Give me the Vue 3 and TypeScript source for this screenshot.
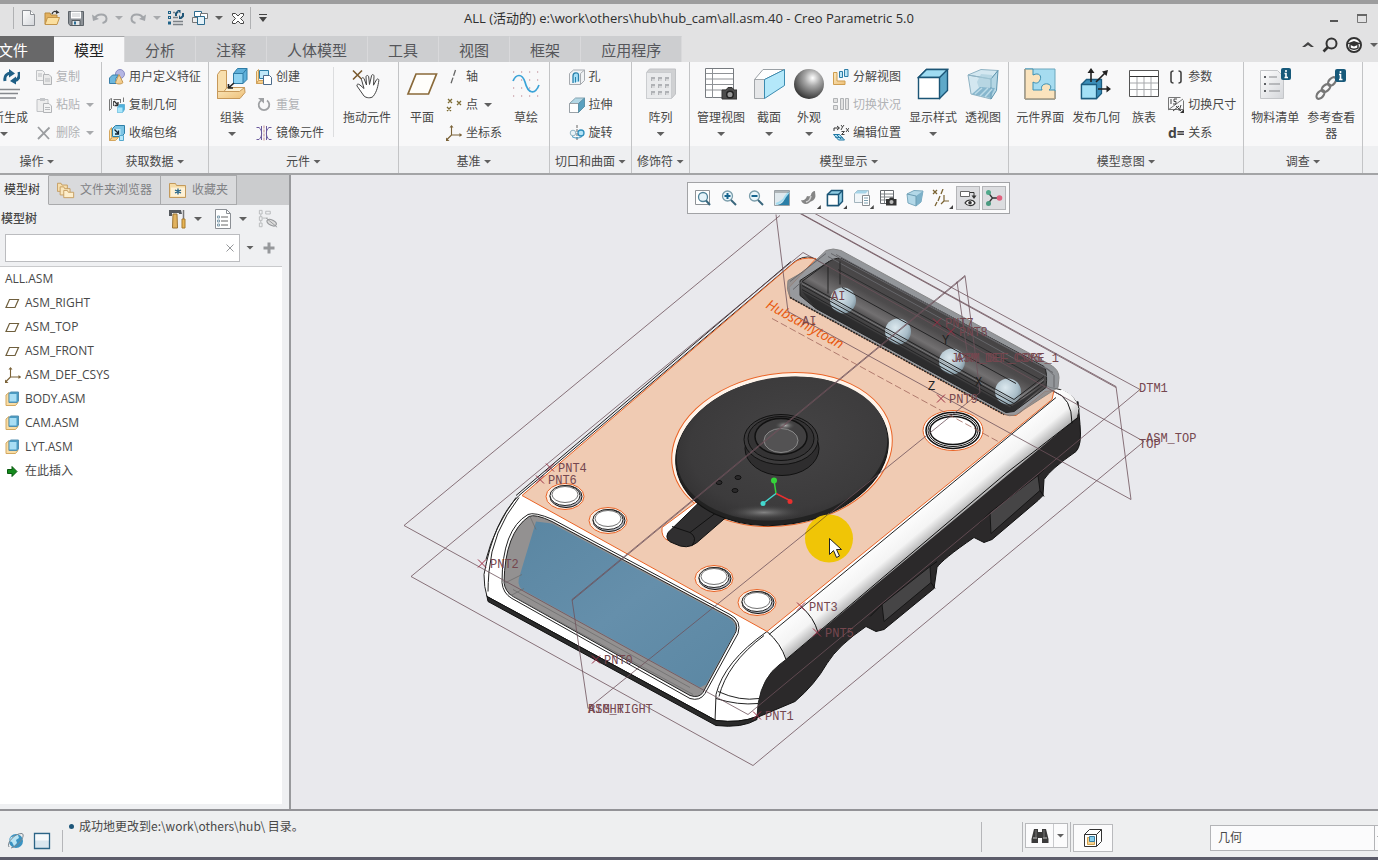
<script setup lang="ts">
import { ref } from 'vue'

interface Command {
  label: string
  icon: string
  arrow?: boolean
  disabled?: boolean
}
type Block =
  | { kind: 'big'; cmd: Command }
  | { kind: 'list'; cmds: Command[] }
  | { kind: 'rule' }
interface Group {
  title: string
  first?: boolean
  blocks: Block[]
}

const big = (label: string, icon: string, arrow = false): Block => ({ kind: 'big', cmd: { label, icon, arrow } })

const tabs: string[] = ['模型', '分析', '注释', '人体模型', '工具', '视图', '框架', '应用程序']
const activeTab = ref('模型')

const groups: Group[] = [
  {
    title: '操作',
    first: true,
    blocks: [
      big('重新生成', 'regen-big', true),
      {
        kind: 'list',
        cmds: [
          { label: '复制', icon: 'copy', disabled: true },
          { label: '粘贴', icon: 'paste', disabled: true, arrow: true },
          { label: '删除', icon: 'delete', disabled: true, arrow: true },
        ],
      },
    ],
  },
  {
    title: '获取数据',
    blocks: [
      {
        kind: 'list',
        cmds: [
          { label: '用户定义特征', icon: 'udf' },
          { label: '复制几何', icon: 'copygeom' },
          { label: '收缩包络', icon: 'shrink' },
        ],
      },
    ],
  },
  {
    title: '元件',
    blocks: [
      big('组装', 'assemble', true),
      {
        kind: 'list',
        cmds: [
          { label: '创建', icon: 'create' },
          { label: '重复', icon: 'repeat', disabled: true },
          { label: '镜像元件', icon: 'mirror' },
        ],
      },
      { kind: 'rule' },
      big('拖动元件', 'drag'),
    ],
  },
  {
    title: '基准',
    blocks: [
      big('平面', 'plane-big'),
      {
        kind: 'list',
        cmds: [
          { label: '轴', icon: 'axis' },
          { label: '点', icon: 'points', arrow: true },
          { label: '坐标系', icon: 'csys' },
        ],
      },
      big('草绘', 'sketch'),
    ],
  },
  {
    title: '切口和曲面',
    blocks: [
      {
        kind: 'list',
        cmds: [
          { label: '孔', icon: 'hole' },
          { label: '拉伸', icon: 'extrude' },
          { label: '旋转', icon: 'revolve' },
        ],
      },
    ],
  },
  { title: '修饰符', blocks: [big('阵列', 'pattern', true)] },
  {
    title: '模型显示',
    blocks: [
      big('管理视图', 'viewmgr', true),
      big('截面', 'section', true),
      big('外观', 'appearance', true),
      {
        kind: 'list',
        cmds: [
          { label: '分解视图', icon: 'explode' },
          { label: '切换状况', icon: 'toggle', disabled: true },
          { label: '编辑位置', icon: 'editpos' },
        ],
      },
      big('显示样式', 'style', true),
      big('透视图', 'persp'),
    ],
  },
  {
    title: '模型意图',
    blocks: [
      big('元件界面', 'puzzle'),
      big('发布几何', 'publish'),
      big('族表', 'famtable'),
      {
        kind: 'list',
        cmds: [
          { label: '参数', icon: 'params' },
          { label: '切换尺寸', icon: 'dims' },
          { label: '关系', icon: 'relation' },
        ],
      },
    ],
  },
  { title: '调查', blocks: [big('物料清单', 'bom'), big('参考查看器', 'refview')] },
]

interface Quick {
  icon?: string
  name: string
  arrow?: boolean
  disabled?: boolean
}
const quick: Quick[] = [
  { icon: 'new', name: '新建' },
  { icon: 'open', name: '打开' },
  { icon: 'save', name: '保存' },
  { icon: 'undo', name: '撤消', disabled: true },
  { name: '撤消列表', arrow: true, disabled: true },
  { icon: 'redo', name: '重做', disabled: true },
  { name: '重做列表', arrow: true, disabled: true },
  { icon: 'regen', name: '重新生成' },
  { icon: 'windows', name: '窗口' },
  { name: '窗口列表', arrow: true },
  { icon: 'closewin', name: '关闭' },
]

const tree = [
  { label: 'ALL.ASM', icon: '' },
  { label: 'ASM_RIGHT', icon: 'plane' },
  { label: 'ASM_TOP', icon: 'plane' },
  { label: 'ASM_FRONT', icon: 'plane' },
  { label: 'ASM_DEF_CSYS', icon: 'csys' },
  { label: 'BODY.ASM', icon: 'asm' },
  { label: 'CAM.ASM', icon: 'asm' },
  { label: 'LYT.ASM', icon: 'asm' },
  { label: '在此插入', icon: 'insert' },
]

const viewTools = [
  { icon: 'fit', name: '重新调整' },
  { icon: 'zoomin', name: '放大' },
  { icon: 'zoomout', name: '缩小' },
  { icon: 'repaint', name: '重画' },
  { icon: 'render', name: '渲染选项', more: true },
  { icon: 'shade', name: '显示样式', more: true },
  { icon: 'saved', name: '已保存方向', more: true },
  { icon: 'viewmgr-s', name: '视图管理器' },
  { icon: 'persp-s', name: '透视图' },
  { icon: 'datums', name: '基准显示过滤器', more: true },
  { icon: 'annot', name: '注释显示', on: true },
  { icon: 'spin', name: '旋转中心', on: true },
]

const points = [
  { t: 'PNT4', x: 550, y: 468 },
  { t: 'PNT6', x: 540, y: 480 },
  { t: 'PNT2', x: 482, y: 564 },
  { t: 'PNT0', x: 596, y: 660 },
  { t: 'PNT1', x: 757, y: 716 },
  { t: 'PNT3', x: 801, y: 607 },
  { t: 'PNT5', x: 817, y: 633 },
  { t: 'PNT9', x: 941, y: 399 },
  { t: 'PNT7', x: 937, y: 323 },
  { t: 'PNT8', x: 951, y: 332 },
]
const keys = [
  { x: 565, y: 497 },
  { x: 608, y: 521 },
  { x: 714, y: 579 },
  { x: 757, y: 603 },
]
const balls = [
  { x: 843, y: 301 },
  { x: 898, y: 332 },
  { x: 952, y: 362 },
  { x: 1008, y: 392 },
]

const filter = ref('几何')
const query = ref('')
</script>

<template>
  <div class="app">
    <svg class="sprite" aria-hidden="true">
      <defs>
        <linearGradient id="g-blue" x1="0" y1="0" x2="1" y2="1"><stop offset="0" stop-color="#bdeafc" /><stop offset="1" stop-color="#58b4dc" /></linearGradient>
        <linearGradient id="g-tan" x1="0" y1="0" x2="1" y2="1"><stop offset="0" stop-color="#fbe9c0" /><stop offset="1" stop-color="#eec078" /></linearGradient>
        <linearGradient id="g-grey" x1="0" y1="0" x2="1" y2="1"><stop offset="0" stop-color="#ffffff" /><stop offset="1" stop-color="#d4d6da" /></linearGradient>
        <radialGradient id="g-ball" cx=".62" cy=".3" r=".75"><stop offset="0" stop-color="#ffffff" /><stop offset=".35" stop-color="#a9a9a9" /><stop offset="1" stop-color="#2e2e2e" /></radialGradient>
      </defs>

      <symbol id="new" viewBox="0 0 16 16"><path d="M2.500.500h8l4 4v11h-12z" fill="url(#g-grey)" stroke="#8b8e93" /><path d="M10.500.500v4h4" fill="#fff" stroke="#8b8e93" /></symbol>
      <symbol id="open" viewBox="0 0 16 16"><path d="M1 3h5l1 2h6v9H1z" fill="#e3b160" stroke="#b98a3d" /><path d="M3.500 7.500h12l-2.500 7H1z" fill="#fbdf9f" stroke="#c3954b" /><path d="M8 4c1-3 3-3 5-2" fill="none" stroke="#333" stroke-width="1.300" /><path d="M12 0l3.500 2.500L12 4z" fill="#333" /></symbol>
      <symbol id="save" viewBox="0 0 16 16"><path d="M.500 1.500h15v14H2l-1.500-2z" fill="#8d9297" stroke="#5d6369" /><path d="M3 1.500h10v7H3z" fill="#fff" /><path d="M4 4h8M4 6h8" stroke="#c5c8cb" /><path d="M4 10.500h8v5H4z" fill="#e3e6e8" stroke="#555b60" /><path d="M6 11.500h2v3H6z" fill="#2b6e96" /></symbol>
      <symbol id="undo" viewBox="0 0 16 16"><path d="M3 8C5 3.500 14 3 14.500 8.500c0 2-1 4-4 4.500" fill="none" stroke="#a3a6aa" stroke-width="2" /><path d="M0 4.500l1 6.500 6-2z" fill="#a3a6aa" /></symbol>
      <symbol id="redo" viewBox="0 0 16 16"><path d="M13 8C11 3.500 2 3 1.500 8.500c0 2 1 4 4 4.500" fill="none" stroke="#a3a6aa" stroke-width="2" /><path d="M16 4.500l-1 6.500-6-2z" fill="#a3a6aa" /></symbol>
      <symbol id="regen" viewBox="0 0 16 16"><g fill="none" stroke="#1e6288"><rect x=".500" y="1.500" width="2" height="2" /><rect x=".500" y="6.500" width="2" height="2" /><rect x=".500" y="12" width="2" height="2" /></g><path d="M5 2.500h2M5 7.500h5M5 11.500h10M5 14.500h10" stroke="#7d8287" stroke-width="1.300" /><path d="M8 6V3.500l2-2M15 3v3l-2 2" fill="none" stroke="#1e5577" stroke-width="2" /><path d="M9 0h3.500v3.500zM11 5v4l3 0z" fill="#1e5577" /></symbol>
      <symbol id="windows" viewBox="0 0 16 16"><path d="M2.500 1.500h7v5h-7z" fill="#fff" stroke="#2c6b8e" /><path d="M8.500 3.500h7v5h-7z" fill="#fff" stroke="#777" /><path d="M.500 7.500h7v5h-7z" fill="#eee" stroke="#777" /><path d="M5.500 6.500h7v8h-7z" fill="#e4f1f8" stroke="#2c6b8e" /></symbol>
      <symbol id="closewin" viewBox="0 0 16 16"><path d="M2.500 3.500h3L8 6l2.500-2.500h3v2L10.500 8.500l3 3v2h-3L8 11l-2.500 2.500h-3v-2l3-3-3-3z" fill="#fff" stroke="#444" /></symbol>

      <symbol id="regen-big" viewBox="0 0 32 32"><path d="M17 13c-1-5 2-8 6-8M31 4c1 5-1 8-5 9" fill="none" stroke="#1f5f86" stroke-width="3" /><path d="M21 1l6 4.500-6 4zM28 8.500v8L22 13z" fill="#1f5f86" /><path d="M4 21.500h28M4 25.500h26M4 30h24" stroke="#85888d" stroke-width="1.500" /></symbol>
      <symbol id="copy" viewBox="0 0 16 16"><path d="M.500 1.500h6l2 2v8h-8z" fill="#f1f1f1" stroke="#c0c2c5" /><path d="M7.500 5.500h5.500l2.500 2.500v7.500h-8z" fill="#eaeaea" stroke="#b2b4b7" /><path d="M2 5h4M2 7h4M9 10h5M9 12h5" stroke="#b9bbbe" /></symbol>
      <symbol id="paste" viewBox="0 0 16 16"><path d="M1 2.500h11v12H1z" fill="#ededed" stroke="#c0c2c5" /><path d="M4 1h5v3H4z" fill="#c4c6c9" /><path d="M7.500 6.500h5.500l2.500 2.500v6.500h-8z" fill="#f3f3f3" stroke="#b2b4b7" /><path d="M9 10.500h5M9 12.500h5" stroke="#b9bbbe" /></symbol>
      <symbol id="delete" viewBox="0 0 16 16"><path d="M2 2l11 12M13.500 2.500L2 14" stroke="#9b9da0" stroke-width="1.800" /></symbol>
      <symbol id="udf" viewBox="0 0 16 16"><circle cx="11" cy="5" r="4.500" fill="#b4b6e4" stroke="#8a8cc4" /><path d="M.500 9l3-3h6l-2.500 3v5.500H.500z" fill="#6db7dd" stroke="#3a7fa8" /><path d="M6.500 13.500L10 5.500l4 8c-1.500 2-6 2-7.500 0z" fill="url(#g-tan)" stroke="#c69a55" /></symbol>
      <symbol id="copygeom" viewBox="0 0 16 16"><path d="M.500 13.500v-11l2-1v10zM4.500 2.500h7" fill="#eee" stroke="#777" /><path d="M4.500 4v5" stroke="#555" /><path d="M5 4l4 4M9 5v3.500H5.500" fill="none" stroke="#333" stroke-width="1.300" /><path d="M11.500 2v4M14.500.500V5" stroke="#777" /><path d="M8.500 10.500l2-3h5v5l-2 3h-5z" fill="#4fb0dc" stroke="#64b2d4" /><path d="M8.500 10.500h5v5h-5z" fill="#a9e6fb" /></symbol>
      <symbol id="shrink" viewBox="0 0 16 16"><path d="M.500 5.500l2-3v10l-2 3z" fill="#fbe3b0" stroke="#d5a75e" /><path d="M.500 15.500h6l3-3h-6z" fill="#f6cf8c" stroke="#d5a75e" /><path d="M3.500 3.500l3-3h9v8l-3 3h-9z" fill="#7cc4e4" stroke="#2d7fa8" /><path d="M4 4h7.500v7H4z" fill="#c2ecfb" /><path d="M5.500 4.500l4 4M9.500 5.500v3.500H6" fill="none" stroke="#123" stroke-width="1.300" /><path d="M10.500 10.500h4v5h-4z" fill="#b7e8fa" stroke="#55a8cd" /></symbol>
      <symbol id="assemble" viewBox="0 0 32 32"><path d="M1.500 6.500l3-4h6v20l-3 8h-6z" fill="#f8dfae" stroke="#c6985a" /><path d="M1.500 30.500v-7h19l8-4 .500 5-5 6z" fill="url(#g-tan)" stroke="#c6985a" /><path d="M8 23.500l3-4h17.500l-5 4z" fill="#fdf0d0" stroke="#c6985a" /><path d="M17.500 5.500l4-5h9.500v11l-4 4h-9.500z" fill="#5fb0da" stroke="#2f7ca6" /><path d="M17.500 5.500h9.500v10h-9.500z" fill="#8ed2f1" stroke="#2f7ca6" /><path d="M27 5.500l4-5" stroke="#2f7ca6" /><path d="M18 15l-5 4.500M12.500 16v4H17" fill="none" stroke="#222" stroke-width="1.600" /></symbol>
      <symbol id="create" viewBox="0 0 16 16"><path d="M.500 2.500l2-2v11l-2 3z" fill="#fbe3b0" stroke="#cfa05a" /><path d="M.500 14.500h6l2-3h-6z" fill="#f6cf8c" stroke="#cfa05a" /><path d="M3.500 1.500h9v8h-9z" fill="#bfe7f8" stroke="#2d7fa8" /><path d="M7.500 6.500h6l2 2v7h-8z" fill="#fff" stroke="#4d6b8a" /></symbol>
      <symbol id="repeat" viewBox="0 0 16 16"><path d="M5 3.500a5.300 5.300 0 1 0 6 0" fill="none" stroke="#9fa1a4" stroke-width="1.800" /><path d="M2 1h6v5.500z" fill="#9fa1a4" /></symbol>
      <symbol id="mirror" viewBox="0 0 16 16"><path d="M8 .500v15" stroke="#c28f91" stroke-dasharray="3 1" /><path d="M.500 2.500H3c3.500 2.500 3.500 9 0 12H.500M5.500 1v14M15.500 2.500H13c-3.500 2.500-3.500 9 0 12h2.500M10.500 1v14" fill="none" stroke="#6b5a9d" /></symbol>
      <symbol id="drag" viewBox="0 0 32 32"><path d="M2 2.500l9 9M11 2.500l-9 9" stroke="#7a5a2e" stroke-width="1.600" /><path d="M13 28l-7-10c-.6-2 1.300-2.500 3-1l4 3.500-2.500-9c-.3-2 2-2.500 2.700-.5l2.300 6-.5-8c0-2 2.500-2 2.700 0l.8 7.500L20.500 8c.2-2 2.500-1.700 2.500.2l-.5 9 3-5.500c1-1.500 2.700-.5 2.300 1-.8 5-1.800 11-5.800 15.800-2 2-7 1.500-9-.5z" fill="#fff" stroke="#444" /></symbol>
      <symbol id="plane-big" viewBox="0 0 32 32"><path d="M10 6h20.500L22.500 26H2z" fill="#fffefb" stroke="#8a6a3a" stroke-width="1.700" /></symbol>
      <symbol id="axis" viewBox="0 0 16 16"><path d="M9.500 1L4.500 16" stroke="#666" stroke-width="1.300" stroke-dasharray="6 2" /></symbol>
      <symbol id="points" viewBox="0 0 16 16"><path d="M2 2l4 4M6 2L2 6M11 4l4 4M15 4l-4 4M1 10l4 4M5 10l-4 4" stroke="#7c6b33" stroke-width="1.300" /></symbol>
      <symbol id="csys" viewBox="0 0 16 16"><path d="M5.500 1v9h10M5.500 10L1 14.500" fill="none" stroke="#7a6238" stroke-width="1.100" /><path d="M3.500 2.500L5.500 0l2 2.500M13.500 8l2.500 2-2.500 2M0 12.500V16h3.500" fill="#7a6238" /></symbol>
      <symbol id="sketch" viewBox="0 0 32 32"><g stroke="#b87c88" stroke-width="1.200" stroke-dasharray="1.200 6.800"><path d="M3 4h28M3 12h28M3 20h28M3 28h28" /></g><path d="M3 13c3-7 9-8 12 1 3 12 10 13 14 3" fill="none" stroke="#3aa3d8" stroke-width="1.700" /></symbol>
      <symbol id="hole" viewBox="0 0 16 16"><path d="M.500 4.500l4-3.500h11v10.500l-4 4H.500z" fill="#f1f3f5" stroke="#a7abb0" /><path d="M11.500 4.500v11M11.500 4.500l4-3.500" stroke="#a7abb0" /><path d="M4 14V7c0-4 5.500-4 5.500-1v6.500" fill="#a7e0f7" stroke="#2a82ad" stroke-width="1.300" /><path d="M6.500 13.500V8" stroke="#2a82ad" /></symbol>
      <symbol id="extrude" viewBox="0 0 16 16"><path d="M.500 6.500l6-5.500h9v8.500l-6 6h-9z" fill="#b4d8e6" stroke="#84a3b0" /><path d="M.500 6.500h9v9h-9z" fill="#fff" stroke="#9aa1a7" /><path d="M9.500 6.500l6-5.500v8.500l-6 6z" fill="#5aa0bf" stroke="#5f92a8" /></symbol>
      <symbol id="revolve" viewBox="0 0 16 16"><path d="M8 0v16" stroke="#666" stroke-dasharray="3 1" /><circle cx="12" cy="8" r="3" fill="#b5e4f7" stroke="#2d8dbb" stroke-width="1.300" /><circle cx="4" cy="8" r="2.800" fill="#eaf3f7" stroke="#91b4c4" /><path d="M3 11.500c3 2 7 2 10 0" fill="none" stroke="#2d8dbb" /></symbol>
      <symbol id="pattern" viewBox="0 0 32 32"><path d="M1.500 4.500l3-3.500h26v25l-4 4.500h-25z" fill="#d0d1d3" stroke="#c0c2c5" /><path d="M1.500 4.500h25v26h-25z" fill="#e9eaec" stroke="#cbcdd0" /><g fill="#b0b2b6"><path d="M6 9h4v4H6zM13 9h4v4h-4zM20 9h4v4h-4zM6 16h4v4H6zM13 16h4v4h-4zM20 16h4v4h-4zM6 23h4v4H6zM13 23h4v4h-4zM20 23h4v4h-4z" /></g><path d="M7 12h3M14 12h3M21 12h3M7 19h3M14 19h3M21 19h3M7 26h3M14 26h3M21 26h3" stroke="#fff" /></symbol>
      <symbol id="viewmgr" viewBox="0 0 32 32"><path d="M.500.500h28v29h-28z" fill="#fff" stroke="#777b80" /><path d="M7.500 1v29M1 5.500h27M1 11h27M1 16.500h27M1 22h27" stroke="#8f9296" /><path d="M17 22h4l2-2.500h4l2 2.500h3v9H17z" fill="#4c4c4c" stroke="#333" /><circle cx="25" cy="26.500" r="3.300" fill="#999" stroke="#222" stroke-width="1.500" /></symbol>
      <symbol id="section" viewBox="0 0 32 32"><path d="M1.500 11.500L10 1.500h21.500l-20 10z" fill="#fff" stroke="#9aa0a5" /><path d="M1.500 11.500h10v19h-10z" fill="#e6e7e9" stroke="#a2a6aa" /><path d="M11.500 11.500l20-10v16l-20 13z" fill="#b4e8fa" stroke="#3b8bb0" /></symbol>
      <symbol id="appearance" viewBox="0 0 32 32"><circle cx="16" cy="16" r="15" fill="url(#g-ball)" /></symbol>
      <symbol id="explode" viewBox="0 0 16 16"><path d="M.500 3.500h3.500v8.500h8v3.500H.500z" fill="url(#g-tan)" stroke="#cf9e50" /><path d="M6.500 2.500h3v6h-3zM11.500.500h3.500v7h-3.500z" fill="#bde6f7" stroke="#2f7ea7" /></symbol>
      <symbol id="toggle" viewBox="0 0 16 16"><path d="M.500 1.500h4v4h-4zM.500 8.500h4v4h-4zM7.500 1.500h3v11h-3zM12.500 1.500h3v11h-3z" fill="#e2e2e2" stroke="#b0b2b5" /></symbol>
      <symbol id="editpos" viewBox="0 0 16 16"><path d="M1 6V3h5M4 1l2.500 2L4 5" fill="none" stroke="#333" /><path d="M8 0l1.500 2L11 0M9.500 2L8 5M13 3l3 4M16 3l-3 4M8.500 6.500h3l-3 3h3" fill="none" stroke="#444" /><path d="M.500 9.500h6l5 5.500h-6zM2 12l8 1M4 10l4 4" fill="#b7e3f5" stroke="#1f77a3" /></symbol>
      <symbol id="style" viewBox="0 0 32 32"><path d="M1.500 9.500l8-8h21v21l-8 8z" fill="#5ea9c9" stroke="#1b5576" stroke-width="1.400" /><path d="M1.500 9.500l8-8h21l-8 8z" fill="#9fdcf2" stroke="#1b5576" stroke-width="1.400" /><path d="M1.500 9.500h21v21h-21z" fill="#fff" stroke="#1b5576" stroke-width="1.400" /></symbol>
      <symbol id="persp" viewBox="0 0 32 32"><path d="M1 7L14 1.500l17 1-7 8.500zM1 7l3 19 20 5V11z" fill="#d3e7f0" stroke="#8fb3c4" /><path d="M24 11l7-8.500-1.500 20L24 31z" fill="#b4d6e4" stroke="#5d94ae" /><path d="M10 14l4-8 11 1v12l-13 1z" fill="#a5cbdb" opacity=".6" /><path d="M5 26l8-7 15 1-5 10z" fill="#74aac4" opacity=".8" /><path d="M8 26l7-6M13 28l8-8M18 29l7-8" stroke="#bcdbe8" stroke-width="1.500" /></symbol>
      <symbol id="puzzle" viewBox="0 0 32 32"><path d="M1 1h30v30H1z" fill="#a6dcf0" stroke="#6aa7bd" /><path d="M1 1h8v6c6-3 9 1 7 5-1 3-4 4-7 2v8h9c-2-4 2-7 6-6 4 1 3 5 1 6h6v9H1z" fill="#fae3bd" stroke="#3b8fb3" /><path d="M1 1v30h30v-8" fill="none" stroke="#d09668" /></symbol>
      <symbol id="publish" viewBox="0 0 32 32"><path d="M1.500 16.500l5-5h15v14l-5 5h-15z" fill="#3c8fba" stroke="#1d5d80" stroke-width="1.300" /><path d="M1.500 16.500h15v14h-15z" fill="#a3e0f6" stroke="#1d5d80" stroke-width="1.300" /><path d="M11 14V3M16 14L26 4M18 21h11" stroke="#222" stroke-width="1.600" /><path d="M7.500 5L11 0l3.500 5zM22 3.500l6-1.500-1.500 6zM26.500 17.500l4.500 3.500-4.500 3.500z" fill="#222" /></symbol>
      <symbol id="famtable" viewBox="0 0 32 32"><path d="M1.500 2.500h29v26h-29z" fill="#fff" stroke="#555" /><path d="M2 8.500h28" stroke="#333" /><path d="M2 15h28M2 21.500h28M9 9v19M16 9v19M23 9v19" stroke="#a7a9ac" /></symbol>
      <symbol id="params" viewBox="0 0 16 16"><path d="M5.500 2C3.500 2 3 2.500 3 4v8c0 1.500.5 2 2.500 2M10.500 2c2 0 2.500.5 2.500 2v8c0 1.500-.5 2-2.500 2" fill="none" stroke="#444" stroke-width="1.600" /></symbol>
      <symbol id="dims" viewBox="0 0 16 16"><path d="M.500.500h12M.500.500v12h15v-9M0 13L15 2" fill="none" stroke="#777" /><path d="M3 2v5M5 7h3V4.500H6V2h3M5 14l6-5M8 9l5 5M13 8l-2 6" fill="none" stroke="#444" /><path d="M16 12v4h-4z" fill="#333" /></symbol>
      <symbol id="relation" viewBox="0 0 16 16"><text x="0" y="13" font-size="14" font-weight="700" fill="#444" font-family="Open Sans, sans-serif">d=</text></symbol>
      <symbol id="bom" viewBox="0 0 32 32"><path d="M1.500 2.500h17l6 6v22h-23z" fill="url(#g-grey)" stroke="#c4c6c9" /><path d="M10 9h8M10 16h11M10 23h11" stroke="#85888c" stroke-width="1.200" /><path d="M5 8h2v2H5zM5 15h2v2H5zM5 22h2v2H5z" fill="#5d6064" /><rect x="22" y="0" width="10" height="12" rx="2" fill="#17597a" /><path d="M27 2v2M25.500 5.500H27V9M25.500 9.500h3.500" stroke="#fff" stroke-width="1.600" fill="none" /></symbol>
      <symbol id="refview" viewBox="0 0 32 32"><g fill="none" stroke="#777" stroke-width="2.200"><ellipse cx="5.500" cy="26.500" rx="5" ry="3" transform="rotate(-50 5.500 26.500)" /><ellipse cx="11" cy="20" rx="5" ry="3" transform="rotate(-40 11 20)" /><ellipse cx="17" cy="13.500" rx="5" ry="3" transform="rotate(-50 17 13.500)" /></g><rect x="20" y="1" width="11" height="13" rx="2" fill="#17597a" /><path d="M25.500 3v2M24 6.500h1.500V11M24 11.500h3.500" stroke="#fff" stroke-width="1.600" fill="none" /></symbol>

      <symbol id="folders" viewBox="0 0 20 18"><path d="M.500 1.500h4l1 2h6v7H.500z" fill="#f7dfae" stroke="#c39a5c" /><path d="M3.500 5.500h4l1 2h6v7h-11z" fill="#f9e6bd" stroke="#c39a5c" /><path d="M7.500 9.500h4l1 2h6v6h-11z" fill="#fdeecb" stroke="#c39a5c" /></symbol>
      <symbol id="fav" viewBox="0 0 18 16"><path d="M.500 1.500h6l1 2h9v12H.500z" fill="#f6dca6" stroke="#c39a5c" /><path d="M2 5.500h14v9H2z" fill="#fdf1d6" /><path d="M9 6.500v6M6 8l6 3M12 8l-6 3" stroke="#1c5f86" stroke-width="1.300" /></symbol>
      <symbol id="tools" viewBox="0 0 18 20"><path d="M0 1h12l1 4h-3V4H3v3H0z" fill="#55595e" /><path d="M4 5h4l.5 14h-5z" fill="#e2b35f" stroke="#9b7434" /><path d="M14.500 1v10" stroke="#777" stroke-width="1.500" /><path d="M13 10h3v9h-3z" fill="#e8b452" stroke="#a77a2f" /></symbol>
      <symbol id="listset" viewBox="0 0 18 20"><path d="M1.500.500h11l4 4v15h-15z" fill="#fff" stroke="#8b8f94" /><path d="M12.500.500v4h4" fill="none" stroke="#8b8f94" /><path d="M7 8h7M7 12h7M7 16h7" stroke="#666" /><path d="M3.500 7h2v2h-2zM3.500 11h2v2h-2zM3.500 15h2v2h-2z" fill="none" stroke="#7f9cad" /></symbol>
      <symbol id="treeeye" viewBox="0 0 22 20"><path d="M1.500.500h3v4h-3zM1.500 7.500h3v4h-3zM1.500 14.500h3v4h-3zM8.500 1.500h5v3h-5zM5 9h6M3 5v2M3 12v2" fill="none" stroke="#b5b7ba" /><ellipse cx="15" cy="14" rx="5.500" ry="3" transform="rotate(25 15 14)" fill="#ddd" stroke="#96989b" stroke-width="1.200" /><path d="M9 9l12 10" stroke="#96989b" /></symbol>
      <symbol id="plane" viewBox="0 0 16 16"><path d="M4.500 4.500h9L10 12.500H1z" fill="#fff" stroke="#6f5f3d" stroke-width="1.200" /></symbol>
      <symbol id="asm" viewBox="0 0 16 16"><path d="M1 4l3-2.500v10h9l-2.500 3H1z" fill="#f9dda4" stroke="#d3a860" /><path d="M4 2.500l1.500-1.500h8v9L12 11.500H4z" fill="#4a9cc4" stroke="#5590b0" /><path d="M4.500 3h7v7.500h-7z" fill="#a9def4" /></symbol>
      <symbol id="insert" viewBox="0 0 16 16"><path d="M2.500 6.500H7V3.500l5 5-5 5v-3H2.500z" fill="#148a1c" stroke="#0a5a10" /></symbol>

      <symbol id="fit" viewBox="0 0 18 18"><path d="M1.500 1.500h14v14h-14z" fill="#fff" stroke="#8f9397" /><circle cx="9" cy="8" r="4.500" fill="#e6f4fa" stroke="#4e8299" stroke-width="1.300" /><path d="M12 11.500l4 4.500" stroke="#39667c" stroke-width="2" /></symbol>
      <symbol id="zoomin" viewBox="0 0 18 18"><circle cx="7.500" cy="7" r="5" fill="#eaf6fb" stroke="#7b9dab" stroke-width="1.300" /><path d="M7.500 4v6M4.500 7h6" stroke="#16658f" stroke-width="2" /><path d="M11 11l5 5" stroke="#39667c" stroke-width="2" /></symbol>
      <symbol id="zoomout" viewBox="0 0 18 18"><circle cx="7.500" cy="7" r="5" fill="#eaf6fb" stroke="#7b9dab" stroke-width="1.300" /><path d="M4.500 7h6" stroke="#16658f" stroke-width="2" /><path d="M11 11l5 5" stroke="#39667c" stroke-width="2" /></symbol>
      <symbol id="repaint" viewBox="0 0 18 18"><path d="M1.500 1.500h15v15h-15z" fill="#dfe8ed" stroke="#9aa1a6" /><path d="M16 3v13H4c5-1 7-3 8-8z" fill="#2a7fa8" /><path d="M3 15c5-2 8-4 9-7l4-5" fill="none" stroke="#a3dcf0" stroke-width="2" /><path d="M2 3h14" stroke="#555" stroke-width=".700" /></symbol>
      <symbol id="render" viewBox="0 0 18 18"><path d="M1 11c3 1 5-1 6-4 1 0 3 1 4-1 0-2 2-4 4-4 0 3 1 5 0 7-2 4-5 3-6 5-3 2-7 1-8-3z" fill="#858585" /><path d="M6 13c3-1 4-2 5-6" stroke="#d2d2d2" stroke-width="1.500" fill="none" /></symbol>
      <symbol id="shade" viewBox="0 0 18 18"><path d="M1.500 5.500l4-4h11v11l-4 4h-11z" fill="#8ecbe2" stroke="#1b5576" stroke-width="1.400" /><path d="M1.500 5.500h11v11h-11z" fill="#fff" stroke="#1b5576" stroke-width="1.400" /><path d="M12.500 5.500l4-4" stroke="#1b5576" stroke-width="1.400" /></symbol>
      <symbol id="saved" viewBox="0 0 18 18"><path d="M1.500 4.500l3-3h11v12h-14z" fill="#f0f5f8" stroke="#a3b4bd" /><path d="M1.500 4.500l3-3h11l-3 3z" fill="#a5d4e8" /><path d="M9.500 6.500h7v10h-7z" fill="#fff" stroke="#888c90" /><path d="M11 9h4M11 11.500h4M11 14h4" stroke="#7da0b0" /></symbol>
      <symbol id="viewmgr-s" viewBox="0 0 18 18"><path d="M1.500 1.500h13v13h-13z" fill="#fff" stroke="#666a6f" /><path d="M5.500 2v12M2 5h12M2 8h12M2 11h12" stroke="#7f8387" /><path d="M7 10h3l1-1.500h3l1 1.500h2.500v6.500H7z" fill="#333" /><circle cx="12.500" cy="13" r="2" fill="#bbb" /></symbol>
      <symbol id="persp-s" viewBox="0 0 18 18"><path d="M1 5l7-3.500 9 .5-2 11-5 4-8-3z" fill="#b3d8e8" stroke="#7ba9be" /><path d="M10 7l7-5-2 11-5 4z" fill="#7db1c9" /><path d="M1 5l9 2v10" fill="none" stroke="#6d9db3" /></symbol>
      <symbol id="datums" viewBox="0 0 18 18"><path d="M1 1l4 4M5 1L1 5M11 0l-2 5M8 7l-2 5M5 13l-2 4" stroke="#7a6332" stroke-width="1.300" /><path d="M12 6v6h5M12 12l-3 3" stroke="#7a6332" stroke-width="1.200" fill="none" /></symbol>
      <symbol id="annot" viewBox="0 0 18 18"><path d="M1.500 2.500h9v5h-9z" fill="#fff" stroke="#666" /><path d="M11 3.500h4V8" fill="none" stroke="#333" /><path d="M12.500 6.500h5L15 10z" fill="#333" /><path d="M6 14c2.500-4 8-4 10 0-2 3.500-7.500 3.500-10 0z" fill="#fff" stroke="#333" stroke-width="1.200" /><circle cx="11" cy="13.800" r="1.800" fill="#333" /></symbol>
      <symbol id="spin" viewBox="0 0 18 18"><path d="M3.500 4l4 5-4 5M7.500 9H14" fill="none" stroke="#333" stroke-width="1.300" /><circle cx="3.500" cy="3.500" r="2.500" fill="#4fa88a" /><circle cx="3.500" cy="14.500" r="2.500" fill="#4a9a80" /><circle cx="14.500" cy="9" r="2.800" fill="#e1607e" /></symbol>
      <symbol id="globe" viewBox="0 0 18 18"><circle cx="9" cy="9" r="7" fill="#3a93c2" /><path d="M4 5c3 0 4-2 7-2l1 3-3 2 1 3-3 3-2-4-3-1z" fill="#b9e4f4" /><path d="M2 15C-1 11 8 1 15 1.500 19 3 12 14 4 16" fill="none" stroke="#7b868f" /></symbol>
      <symbol id="panel" viewBox="0 0 18 18"><path d="M1.500 1.500h15v15h-15z" fill="#d9e6ef" stroke="#2c6587" stroke-width="1.300" /><path d="M2.500 2.500h13v6h-13z" fill="#f6f9fb" /></symbol>
      <symbol id="binoc" viewBox="0 0 18 18"><path d="M3 2h4v3h4V2h4l2.500 10v4h-6.500v-5H7v5H.500v-4z" fill="#3a3a3a" /><path d="M2 11h4M12 11h4" stroke="#9a9a9a" stroke-width="1.500" /><path d="M5 3v7M13 3v7" stroke="#777" /></symbol>
      <symbol id="boxsel" viewBox="0 0 20 20"><path d="M1.500 6.500l5-5h12v12l-5 5h-12z" fill="#fff" stroke="#333" /><path d="M13.500 6.500v12M1.500 6.500h12l5-5" fill="none" stroke="#333" /><path d="M4.500 9.500h7v7h-7z" fill="#f6d493" stroke="#d1a14e" /><path d="M6.500 8.500h5v5h-5z" fill="#86cdec" stroke="#357fa5" /></symbol>
    </svg>

    <header class="titlebar">
      <div class="quick">
        <span class="vsep"></span>
        <button v-for="q in quick" :key="q.name" class="qbtn" :class="{ narrow: q.arrow }" :disabled="q.disabled" :aria-label="q.name">
          <i v-if="q.arrow" class="tri"></i>
          <svg v-else class="i16"><use :href="'#' + q.icon" /></svg>
        </button>
        <span class="vsep"></span>
        <button class="qbtn" aria-label="自定义快速访问工具栏"><i class="tri bar"></i></button>
      </div>
      <h1>ALL (活动的) e:\work\others\hub\hub_cam\all.asm.40 - Creo Parametric 5.0</h1>
      <div class="winbtns">
        <button aria-label="最小化"><svg viewBox="0 0 12 12" class="i12"><path d="M2 9h8" stroke="#555" stroke-width="2" /></svg></button>
        <button aria-label="最大化"><svg viewBox="0 0 12 12" class="i12"><path d="M1.500 2.500h9v8h-9z" fill="none" stroke="#777" /><path d="M1 3h10" stroke="#666" stroke-width="2" /></svg></button>
      </div>
    </header>

    <nav class="tabs">
      <button class="tab file">文件</button>
      <button v-for="t in tabs" :key="t" class="tab" :class="{ active: t === activeTab }" @click="activeTab = t">{{ t }}</button>
      <div class="tabtools">
        <button aria-label="最小化功能区"><svg viewBox="0 0 12 12" class="i12"><path d="M0 8l6-5 6 5H9L6 6 3 8z" fill="#444" /></svg></button>
        <button aria-label="搜索"><svg viewBox="0 0 16 16" class="i16"><circle cx="9.500" cy="6.500" r="5" fill="none" stroke="#333" stroke-width="2" /><path d="M6 10l-4.500 4.500" stroke="#333" stroke-width="2.600" /></svg></button>
        <button aria-label="学习中心"><svg viewBox="0 0 16 16" class="i16"><circle cx="8" cy="8" r="7" fill="#fff" stroke="#333" stroke-width="2" /><path d="M1 6.500L8 4l7 2.500L8 9.500z" fill="#333" /><path d="M4 8v3c2 1.500 6 1.500 8 0V8" fill="none" stroke="#333" stroke-width="1.500" /></svg></button>
        <button aria-label="更多"><i class="tri"></i></button>
      </div>
    </nav>

    <section class="ribbon">
      <div v-for="g in groups" :key="g.title" class="group" :class="{ first: g.first }">
        <div class="gbody">
          <template v-for="(b, n) in g.blocks" :key="n">
            <button v-if="b.kind === 'big'" class="big">
              <svg class="i32"><use :href="'#' + b.cmd.icon" /></svg>
              <span class="biglabel">{{ b.cmd.label }}</span>
              <i v-if="b.cmd.arrow" class="tri"></i>
            </button>
            <div v-else-if="b.kind === 'list'" class="list">
              <button v-for="c in b.cmds" :key="c.label" class="small" :disabled="c.disabled">
                <svg class="i16"><use :href="'#' + c.icon" /></svg>
                <span>{{ c.label }}</span>
                <i v-if="c.arrow" class="tri"></i>
              </button>
            </div>
            <span v-else class="rule"></span>
          </template>
        </div>
        <button class="gtitle">{{ g.title }}<i class="tri"></i></button>
      </div>
    </section>

    <main class="work">
      <aside class="side">
        <div class="sidetabs">
          <button class="stab on">模型树</button>
          <button class="stab"><svg class="i18"><use href="#folders" /></svg>文件夹浏览器</button>
          <button class="stab"><svg class="i18"><use href="#fav" /></svg>收藏夹</button>
        </div>
        <div class="treehead">
          <h2>模型树</h2>
          <button aria-label="设置"><svg class="i20"><use href="#tools" /></svg><i class="tri"></i></button>
          <button aria-label="显示"><svg class="i20"><use href="#listset" /></svg><i class="tri"></i></button>
          <button aria-label="隐藏项" class="eye"><svg class="i20"><use href="#treeeye" /></svg></button>
        </div>
        <div class="search">
          <div class="field">
            <input v-model="query" type="text" aria-label="搜索模型树" />
            <button aria-label="清除" @click="query = ''"><svg viewBox="0 0 10 10" class="i10"><path d="M1.500 1.500l7 7M8.500 1.500l-7 7" stroke="#96989b" /></svg></button>
          </div>
          <button class="opt" aria-label="搜索选项"><i class="tri"></i></button>
          <button class="opt add" aria-label="添加"><svg viewBox="0 0 12 12" class="i12"><path d="M6 .500v11M.500 6h11" stroke="#96989b" stroke-width="3" /></svg></button>
        </div>
        <ul class="tree">
          <li v-for="t in tree" :key="t.label">
            <svg v-if="t.icon" class="i16"><use :href="'#' + t.icon" /></svg>
            <span>{{ t.label }}</span>
          </li>
        </ul>
      </aside>

      <section class="view">
        <svg class="scene" viewBox="291 176 1087 633" role="img" aria-label="ALL.ASM">
          <defs>
            <linearGradient id="m-side" gradientUnits="userSpaceOnUse" x1="880" y1="537" x2="905" y2="567"><stop offset="0" stop-color="#fff" /><stop offset=".55" stop-color="#f4f4f4" /><stop offset="1" stop-color="#9b9b9c" /></linearGradient>
            <linearGradient id="m-glass" gradientUnits="userSpaceOnUse" x1="945" y1="312" x2="915" y2="366"><stop offset="0" stop-color="#454344" /><stop offset=".35" stop-color="#4d4b4c" /><stop offset=".6" stop-color="#727071" /><stop offset=".72" stop-color="#4c4b4c" /><stop offset="1" stop-color="#2d2d2e" /></linearGradient>
            <radialGradient id="m-disc" cx=".55" cy=".45" r=".6"><stop offset="0" stop-color="#454445" /><stop offset=".8" stop-color="#3c3b3c" /><stop offset="1" stop-color="#323132" /></radialGradient>
            <radialGradient id="m-ball" cx=".4" cy=".35" r=".7"><stop offset="0" stop-color="#dbe8ee" /><stop offset=".7" stop-color="#a9bdc8" /><stop offset="1" stop-color="#7d919c" /></radialGradient>
            <radialGradient id="m-shine" cx=".5" cy=".5" r=".5"><stop offset="0" stop-color="#b5b5b5" /><stop offset="1" stop-color="#3a3a3a" stop-opacity="0" /></radialGradient>
            <linearGradient id="m-blue" x1="0" y1="0" x2="1" y2="1"><stop offset="0" stop-color="#5a86a2" /><stop offset=".5" stop-color="#658fab" /><stop offset="1" stop-color="#5b87a3" /></linearGradient>
          </defs>

          <!-- base, feet and openings -->
          <path d="M486 596L716 722Q740 728 757 718L795 702Q815 685 827 664Q838 646 866 627L876 632L884 630L934 589L937 568Q942 560 974 538L984 543L992 540L1038 501L1043 496L1044 480Q1050 470 1076 452Q1082 446 1080 425L1078 402L780 640Z" fill="#2b292a" stroke="#111" />
          <path d="M882 605L930 567L931 583L884 622ZM990 513L1038 476L1040 491L991 534Z" fill="#464546" stroke="#161616" />
          <path d="M930 567L937 562M931 583L935 589M882 605L870 617M1038 476L1044 470M1040 491L1044 497M990 513L979 524" stroke="#111" fill="none" />

          <!-- shell -->
          <path d="M519 496Q494 520 484 575Q484 588 487 597L716 721Q740 724 757 717Q758 688 772 672Q779 665 786 660L1007 473L1074 421Q1079 416 1079 409Q1076 396 1060 390L1050 388L812 258Q803 256 795 262Z" fill="#fff" stroke="#222" />
          <path d="M767 632L1052 396L1062 390Q1076 396 1078 408L1077 418L786 660Q782 640 767 632Z" fill="url(#m-side)" />
          <path d="M767 632Q781 644 786 660L1007 473L1078 418M801 607Q814 618 818 633M1054 392Q1072 398 1072 424" fill="none" stroke="#111" />
          <path d="M487 597L716 721Q740 724 757 717V720Q742 729 716 726L488 602Z" fill="#2b2b2b" stroke="#111" />
          <path d="M767 632Q724 662 716 695L715 722M764 636Q727 664 719 697M718 692Q740 702 759 699M716 699Q738 706 758 704" fill="none" stroke="#222" />
          <path d="M519 498Q492 532 489 572Q488 584 488 592M516 498Q494 528 486 560" fill="none" stroke="#222" />

          <!-- face -->
          <path d="M522 496L793 264Q800 257 816 259L789 288L790 298L1004 415L1016 416L1045 392L1054 391L1052 400L767 632Z" fill="#f0cbb3" stroke="#ea6325" />
          <path d="M516 496L791 262M769 635L1056 398" stroke="#222" fill="none" />

          <!-- display window -->
          <path d="M502 583Q502 530 528 515Q534 512 553 520L730 615Q742 621 738 634L705 694Q700 702 690 699L512 599Q503 594 502 583Z" fill="#fff" stroke="#222" />
          <path d="M504 583Q505 533 529 517Q535 514 552 522L729 617Q739 622 736 632L703 693Q699 699 690 696L513 597Q505 592 504 583Z" fill="#939191" stroke="#222" />
          <path d="M536 522L552 524L728 618Q738 624 735 633L706 685L700 688L522 590Q516 585 520 575Z" fill="url(#m-blue)" />
          <path d="M504 584L522 575M511 596L524 589M513 590L690 688M508 594L693 695M530 517L536 530" stroke="#6a6a6a" stroke-width=".700" fill="none" />

          <!-- speaker disc -->
          <ellipse cx="782" cy="450" rx="111" ry="76" transform="rotate(-9 782 450)" fill="#fff4ea" stroke="#ea6325" />
          <path d="M697 502L662 528Q661 538 668 541L700 512Z" fill="#fff" stroke="#ea6325" />
          <path d="M699 503L668 533Q664 541 674 544Q687 551 697 543L727 517Z" fill="#302f30" stroke="#111" />
          <path d="M672 527L690 533Q698 538 692 546M690 533L715 514" fill="none" stroke="#111" />
          <ellipse cx="782" cy="452" rx="107" ry="73" transform="rotate(-9 782 452)" fill="#222" stroke="#111" />
          <ellipse cx="782" cy="449" rx="106" ry="71" transform="rotate(-9 782 449)" fill="url(#m-disc)" />
          <ellipse cx="764" cy="513" rx="42" ry="8" fill="url(#m-shine)" opacity=".6" />
          <ellipse cx="782" cy="449" rx="37" ry="27" fill="#2e2d2e" stroke="#111" />
          <ellipse cx="781" cy="440" rx="37" ry="25" fill="#3b3a3b" stroke="#111" />
          <ellipse cx="781" cy="439" rx="33" ry="22" fill="#343334" stroke="#111" />
          <ellipse cx="781" cy="437" rx="26" ry="18" fill="#414041" stroke="#111" stroke-width="1.500" />
          <ellipse cx="785" cy="426" rx="11" ry="5" fill="url(#m-shine)" />
          <ellipse cx="781" cy="441" rx="17" ry="12" fill="#535253" stroke="#999" stroke-width=".800" />
          <g fill="#2b2a2b" stroke="#111"><ellipse cx="719" cy="483" rx="3" ry="2" /><ellipse cx="738" cy="478" rx="3" ry="2" /><ellipse cx="735" cy="491" rx="3" ry="2" /></g>

          <!-- keys -->
          <g v-for="k in keys" :key="k.x">
            <ellipse :cx="k.x" :cy="k.y" rx="19" ry="13" fill="#fbeee4" stroke="#ea6325" />
            <ellipse :cx="k.x + 1" :cy="k.y" rx="16" ry="11" fill="#b9bcc6" stroke="#111" />
            <ellipse :cx="k.x" :cy="k.y - 1" rx="15" ry="10" fill="#fff" stroke="#222" />
            <ellipse :cx="k.x" :cy="k.y - 2" rx="13" ry="8" fill="#fff" stroke="#333" stroke-width=".700" />
          </g>
          <ellipse cx="953" cy="431" rx="30" ry="20" fill="#fff" stroke="#ea6325" />
          <ellipse cx="953" cy="431" rx="27" ry="18" fill="#fff" stroke="#111" stroke-width="1.500" />
          <ellipse cx="953" cy="431" rx="25" ry="16" fill="#fff" stroke="#111" />
          <ellipse cx="953" cy="431" rx="23" ry="14" fill="#fff" stroke="#111" stroke-width="1.500" />

          <!-- smoked glass cover -->
          <path d="M826 251Q833 248 841 251L1050 365Q1059 370 1059 378L1058 388L1024 410Q1014 419 1005 415L790 298Q786 290 788 281L804 272Z" fill="#85888c" opacity=".85" stroke="#777" />
          <path d="M829 262Q838 256 846 261L1044 367Q1048 373 1046 388L1014 412L1006 413L816 309L800 296V281Z" fill="url(#m-glass)" stroke="#222" />
          <path d="M831 254L1053 373M836 255L1050 371M828 257L1047 377M1046 368L1054 376V388M790 282L826 254M793 290L802 282" stroke="#66666a" fill="none" />
          <path d="M838 270L1040 380" stroke="#2c2c2d" fill="none" />
          <circle v-for="b in balls" :key="b.x" :cx="b.x" :cy="b.y" r="13" fill="url(#m-ball)" />
          <path d="M802 292L1010 408L1046 384L1014 412L1006 413L816 309Z" fill="#2a2a2b" opacity=".85" />
          <path d="M802 282L1014 400L1044 377M802 286L1014 404L1044 382M802 290L1012 407M829 262L802 282M840 262V285M828 267V294M842 288L1016 384" stroke="#242425" fill="none" />
          <path d="M802 284L1014 402L1044 380" stroke="#8c8c8e" fill="none" stroke-width=".700" />
          <path d="M790 298L1004 415" stroke="#222" stroke-width="1.500" stroke-dasharray="2 1" />

          <text class="logo" transform="translate(765 308) rotate(29)">Hubsanlytoan</text>

          <!-- datum planes -->
          <g class="datum">
            <path d="M780 216L404 526L748 715L1140 390L813 213" />
            <path d="M803 253L411 577L753 766L1144 442Z" />
            <path d="M776 215L788 312L1131 500L1116 387L801 214" />
            <path d="M965 276L572 600L588 709L980 393L975 352Z" />
            <path d="M957 282L967 352M800 214L1116 388M965 277L572 601" />
            <path d="M772 319L1000 443" stroke="#a0665c" stroke-dasharray="7 3" />
          </g>

          <g class="label">
            <g v-for="p in points" :key="p.t">
              <path :d="`M${p.x - 4} ${p.y - 4}l8 8m0 -8l-8 8`" stroke="#9c2f45" fill="none" />
              <text :x="p.x + 8" :y="p.y + 4">{{ p.t }}</text>
            </g>
            <text x="802" y="325">AI</text>
            <text x="831" y="300">AI</text>
            <text x="951" y="362">JPRM_DEF_CORE_1</text>
            <text x="956" y="362">ASM_DEF_CSYS</text>
            <text x="1139" y="392">DTM1</text>
            <text x="1146" y="442">ASM_TOP</text>
            <text x="1139" y="448">TOP</text>
            <text x="588" y="713">ASM_RIGHT</text>
            <text x="588" y="713">RIGHT</text>
          </g>
          <g class="axes"><text x="928" y="390">Z</text><text x="975" y="386">X</text><text x="942" y="344">Y</text></g>

          <!-- spin centre -->
          <path d="M776 494L774 481" stroke="#35d53a" stroke-width="1.500" /><path d="M776 494L790 501" stroke="#e8302f" stroke-width="1.500" /><path d="M776 494L763 504" stroke="#44d8cf" stroke-width="1.500" />
          <circle cx="774" cy="481" r="3" fill="#35d53a" /><circle cx="790" cy="502" r="2.500" fill="#e8302f" /><circle cx="763" cy="504" r="2.500" fill="#44d8cf" />

          <!-- pointer highlight -->
          <circle cx="829" cy="539" r="24" fill="#f0c400" opacity=".97" />
          <path d="M805 534L829 514" stroke="#8d6d1a" fill="none" />
          <path d="M829.500 539v16l4-4 3 7 3-1.500-3-6.500h5z" fill="#fff" stroke="#222" />
        </svg>

        <div class="viewbar">
          <button v-for="v in viewTools" :key="v.icon" :class="{ on: v.on, more: v.more }" :aria-label="v.name">
            <svg class="i18"><use :href="'#' + v.icon" /></svg>
          </button>
        </div>
      </section>
    </main>

    <footer class="status">
      <div class="sicons">
        <button aria-label="浏览器"><svg class="i18"><use href="#globe" /></svg></button>
        <button aria-label="导航器"><svg class="i18"><use href="#panel" /></svg></button>
      </div>
      <p class="msg"><span class="dot"></span>成功地更改到e:\work\others\hub\ 目录。</p>
      <div class="findarea">
        <div class="findbox">
          <div class="find">
            <button aria-label="查找"><svg class="i18"><use href="#binoc" /></svg></button>
            <button class="drop" aria-label="查找选项"><i class="tri"></i></button>
          </div>
        </div>
        <button class="boxbtn" aria-label="框选"><svg class="i20"><use href="#boxsel" /></svg></button>
      </div>
      <div class="selwrap">
        <select v-model="filter" aria-label="选择过滤器">
          <option>几何</option>
          <option>基准</option>
        </select>
        <i class="tri"></i>
      </div>
    </footer>
  </div>
</template>

<style>
body {
  overflow: hidden;
}
</style>

<style scoped>
.app {
  display: flex;
  flex-direction: column;
  height: 100vh;
  overflow: hidden;
  background: #eeeff0;
  color: #484848;
  font: 12px/16px "Open Sans", "Noto Sans CJK SC", sans-serif;
}
.app * {
  box-sizing: border-box;
}
.sprite {
  position: absolute;
  width: 0;
  height: 0;
}
button {
  margin: 0;
  padding: 0;
  border: 0;
  background: none;
  color: inherit;
  font: inherit;
  white-space: nowrap;
}
button:disabled {
  color: #b0b2b5;
}
svg {
  flex: none;
  display: block;
}
.i10 { width: 10px; height: 10px; }
.i12 { width: 12px; height: 12px; }
.i16 { width: 16px; height: 16px; }
.i18 { width: 18px; height: 18px; }
.i20 { width: 20px; height: 20px; }
.i32 { width: 32px; height: 32px; }
.tri {
  flex: none;
  width: 8px;
  height: 4px;
  background: #606060;
  clip-path: polygon(0 0, 100% 0, 50% 100%);
}
button:disabled .tri {
  background: #a8aaad;
}
.tri.bar {
  height: 8px;
  background: linear-gradient(#444 0 1px, transparent 1px 3px, #444 3px);
  clip-path: polygon(0 0, 100% 0, 100% 3px, 50% 100%, 0 3px);
}

.titlebar {
  flex: none;
  display: grid;
  grid-template-columns: 1fr auto 1fr;
  align-items: center;
  height: 36px;
  padding-bottom: 4px;
  border-top: 4px solid #9d9d9e;
  background: #e2e2e3;
}
.titlebar h1 {
  margin: 0;
  color: #2e2e2e;
  font-size: 13px;
  font-weight: 400;
  line-height: 20px;
}
.quick {
  display: flex;
  align-items: center;
  padding-left: 13px;
}
.qbtn {
  display: flex;
  align-items: center;
  justify-content: center;
  width: 24px;
  height: 22px;
}
.qbtn.narrow {
  width: 14px;
}
.vsep {
  width: 1px;
  height: 22px;
  margin-right: 2px;
  background: #b0b1b3;
}
.qbtn + .vsep {
  margin-right: 0;
}
.winbtns {
  display: flex;
  justify-content: flex-end;
  gap: 16px;
  padding-right: 10px;
}

.tabs {
  flex: none;
  display: flex;
  height: 26px;
  background: #e2e2e3;
}
.tab {
  padding: 0 20px;
  border-right: 1px solid #d9d9db;
  border-top: 1px solid #cdced0;
  background: #cdced0;
  color: #55565a;
  font-size: 15px;
  line-height: 22px;
}
.tab.file {
  margin-left: -22px;
  padding-right: 25px;
  border-color: #686869;
  background: #686869;
  color: #fff;
}
.tab.active {
  border-top-color: #a5a6a8;
  background: #f8f8f9;
  color: #222;
}
.tabtools {
  display: flex;
  align-items: center;
  gap: 8px;
  height: 18px;
  margin-left: auto;
}

.ribbon {
  flex: none;
  display: flex;
  border-bottom: 2px solid #a3a4a6;
  background: linear-gradient(#f8f8f9 84px, #eeeff1 84px);
}
.group {
  flex: none;
  display: flex;
  flex-direction: column;
  border-right: 1px solid #c3c4c6;
}
.group.first {
  margin-left: -27px;
}
.gbody {
  display: flex;
  justify-content: center;
  height: 84px;
  padding: 0 3px;
}
.big {
  display: flex;
  flex-direction: column;
  align-items: center;
  padding: 6px 4px 0;
}
.biglabel {
  max-width: 48px;
  margin: 10px 0 6px;
  white-space: normal;
}
.list {
  display: flex;
  flex-direction: column;
  padding-top: 1px;
}
.small {
  flex: none;
  display: flex;
  align-items: center;
  gap: 4px;
  height: 28px;
  padding: 0 4px;
}
.small .tri {
  margin-left: 2px;
}
.rule {
  width: 1px;
  height: 70px;
  margin: 5px;
  background: #dcdddf;
}
.gtitle {
  display: flex;
  align-items: center;
  justify-content: center;
  gap: 3px;
  height: 27px;
  padding: 4px 5px 0;
}

.work {
  flex: 1;
  display: flex;
  min-height: 0;
}
.side {
  flex: 0 0 291px;
  display: flex;
  flex-direction: column;
  padding-right: 7px;
  padding-bottom: 5px;
  border-right: 2px solid #98999c;
  background: #eff0f2;
}
.sidetabs {
  display: flex;
  height: 30px;
  margin-right: -7px;
  background: #cbccce;
}
.stab {
  display: flex;
  align-items: center;
  gap: 5px;
  padding: 0 8px;
  border: solid #a9aaac;
  border-width: 1px 1px 1px 0;
  background: #d9dadc;
  color: #818285;
}
.stab.on {
  padding: 0 8px 0 4px;
  border-bottom-color: #eff0f2;
  border-top-color: #eff0f2;
  background: #eff0f2;
  color: #333;
}
.treehead {
  display: flex;
  align-items: center;
  gap: 11px;
  height: 28px;
  padding-left: 1px;
}
.treehead h2 {
  margin: 0 auto 0 0;
  font-size: 12px;
  font-weight: 500;
}
.treehead button {
  display: flex;
  align-items: center;
  gap: 6px;
}
.treehead .eye {
  margin-right: 4px;
}
.search {
  display: flex;
  align-items: center;
  height: 34px;
  padding: 0 4px 4px 5px;
  border-bottom: 1px solid #c9cacc;
}
.field {
  flex: 1;
  display: flex;
  align-items: center;
  height: 28px;
  padding-right: 4px;
  border: 1px solid #bbbcbf;
  background: #fff;
}
.field input {
  flex: 1;
  min-width: 0;
  height: 26px;
  border: 0;
  outline: 0;
  background: none;
  font: inherit;
}
.opt {
  display: flex;
  justify-content: center;
  width: 20px;
}
.opt.add {
  width: 18px;
}
.tree {
  flex: 1;
  margin: 0;
  padding: 0 0 0 5px;
  background: #fff;
  list-style: none;
}
.tree li {
  display: flex;
  align-items: center;
  gap: 4px;
  height: 24px;
}

.view {
  position: relative;
  flex: 1;
  min-width: 0;
  background: #e9e9ed;
}
.scene {
  width: 100%;
  height: 100%;
}
.logo {
  fill: #e8590f;
  font: italic 14px "Open Sans", sans-serif;
}
.datum {
  fill: none;
  stroke: #6d525a;
  stroke-width: .800;
}
.label {
  fill: #75474f;
  font: 12px "Liberation Mono", monospace;
}
.axes {
  fill: #222;
  font: 12px "Liberation Mono", monospace;
}
.viewbar {
  position: absolute;
  top: 7px;
  left: 396px;
  display: flex;
  justify-content: space-between;
  width: 323px;
  padding: 3px;
  border: 1px solid #a2a3a6;
  background: #fafafb;
}
.viewbar button {
  position: relative;
  display: flex;
  align-items: center;
  justify-content: center;
  width: 24px;
  height: 24px;
}
.viewbar .on {
  border: 1px solid #b4b5b8;
  background: #dcdde0;
}
.viewbar .more::after {
  content: "";
  position: absolute;
  right: 0;
  bottom: 1px;
  width: 4px;
  height: 4px;
  background: #444;
  clip-path: polygon(100% 0, 100% 100%, 0 100%);
}

.status {
  flex: none;
  display: flex;
  align-items: flex-start;
  height: 51px;
  border-top: 2px solid #939397;
  border-bottom: 3px solid #5c5c6a;
  background: #eeeff0;
}
.sicons {
  display: flex;
  align-items: center;
  gap: 8px;
  width: 63px;
  height: 22px;
  margin-top: 19px;
  padding-left: 7px;
  border-right: 1px solid #b5b6b9;
}
.msg {
  display: flex;
  align-items: center;
  flex: 1;
  gap: 5px;
  margin: 7px 0 0 6px;
  font-family: "Noto Sans CJK SC", sans-serif;
}
.dot {
  width: 5px;
  height: 5px;
  border-radius: 50%;
  background: #1d567a;
}
.findarea {
  display: flex;
  gap: 2px;
  height: 30px;
  margin-top: 11px;
  padding-left: 40px;
  border-left: 1px solid #b5b6b9;
}
.findbox {
  padding: 0 2px;
  border: solid #b5b6b9;
  border-width: 0 1px;
}
.find {
  display: flex;
  height: 25px;
  margin-top: 1px;
  border: 1px solid #b9babd;
  background: #fbfbfc;
}
.find button {
  display: flex;
  align-items: center;
  justify-content: center;
  width: 27px;
}
.find .drop {
  width: 14px;
  border-left: 1px solid #c9cacd;
}
.boxbtn {
  display: flex;
  align-items: center;
  justify-content: center;
  width: 40px;
  height: 28px;
  margin-top: 2px;
  border: 1px solid #b9babd;
  background: #fbfbfc;
}
.selwrap {
  display: flex;
  align-items: center;
  width: 176px;
  height: 26px;
  margin: 14px -8px 0 97px;
  border: 1px solid #b3b4b7;
  background: #fbfbfc;
}
.selwrap select {
  flex: 1;
  height: 24px;
  margin-right: 2px;
  padding: 0 7px;
  border: 0;
  border-right: 1px solid #b3b4b7;
  outline: 0;
  appearance: none;
  background: none;
  color: inherit;
  font: inherit;
}
.tabtools button {
  display: flex;
}
</style>
